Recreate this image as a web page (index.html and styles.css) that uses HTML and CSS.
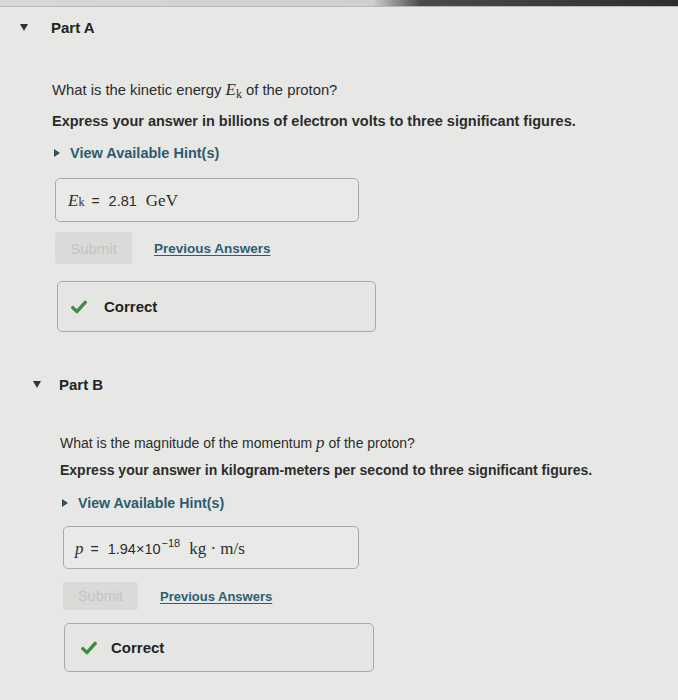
FILE: index.html
```html
<!DOCTYPE html>
<html>
<head>
<meta charset="utf-8">
<link rel="stylesheet" href="styles.css">
</head>
<body>
<div class="topbar"></div>
<section class="part part-a">
  <div class="part-head">
    <span class="caret-down"></span>
    <span class="part-title">Part A</span>
  </div>
  <div class="part-body">
    <p class="question">What is the kinetic energy <span class="math">E</span><sub class="sub">k</sub> of the proton?</p>
    <p class="instr">Express your answer in billions of electron volts to three significant figures.</p>
    <div class="hint"><span class="caret-right"></span><span>View Available Hint(s)</span></div>
    <div class="answer-box"><span class="math">E</span><sub class="sub">k</sub><span class="eq">=</span><span class="num">2.81</span><span class="unit">GeV</span></div>
    <div class="actions">
      <span class="submit">Submit</span>
      <span class="prev">Previous Answers</span>
    </div>
    <div class="correct">
      <svg class="check" viewBox="0 0 16 14" width="16" height="14"><path d="M1.8 7.6 L5.9 11.6 L14.2 2.4" fill="none" stroke="#3f8b3f" stroke-width="3.4" stroke-linecap="round" stroke-linejoin="round"/></svg>
      <span>Correct</span>
    </div>
  </div>
</section>
<section class="part part-b">
  <div class="part-head">
    <span class="caret-down"></span>
    <span class="part-title">Part B</span>
  </div>
  <div class="part-body">
    <p class="question">What is the magnitude of the momentum <span class="math">p</span> of the proton?</p>
    <p class="instr">Express your answer in kilogram-meters per second to three significant figures.</p>
    <div class="hint"><span class="caret-right"></span><span>View Available Hint(s)</span></div>
    <div class="answer-box"><span class="math">p</span><span class="eq">=</span><span class="num">1.94×10<sup class="sup">−18</sup></span><span class="unit">kg · m/s</span></div>
    <div class="actions">
      <span class="submit">Submit</span>
      <span class="prev">Previous Answers</span>
    </div>
    <div class="correct">
      <svg class="check" viewBox="0 0 16 14" width="16" height="14"><path d="M1.8 7.6 L5.9 11.6 L14.2 2.4" fill="none" stroke="#3f8b3f" stroke-width="3.4" stroke-linecap="round" stroke-linejoin="round"/></svg>
      <span>Correct</span>
    </div>
  </div>
</section>
</body>
</html>
```
FILE: styles.css
```css
html, body {
  margin: 0;
  padding: 0;
}
body {
  width: 678px;
  height: 700px;
  overflow: hidden;
  background: #e7e8e6;
  font-family: "Liberation Sans", Arial, sans-serif;
  color: #2a2a2a;
}
.topbar {
  height: 6px;
  background: linear-gradient(to right, #d8d8d6 0%, #cfcfcd 55%, #4a4a4a 62%, #2e2e2e 100%);
  border-bottom: 1px solid #b9b9b7;
}
.part-head {
  display: flex;
  align-items: center;
  height: 20px;
}
.caret-down {
  width: 0;
  height: 0;
  border-left: 4.5px solid transparent;
  border-right: 4.5px solid transparent;
  border-top: 7px solid #333;
}
.part-title {
  font-size: 15px;
  font-weight: bold;
  color: #232323;
}
.part-a .part-head {
  margin-top: 10px;
  padding-left: 20px;
  gap: 23px;
}
.part-a .part-body {
  padding-left: 52px;
}
.part-b .part-head {
  margin-top: 42px;
  padding-left: 33px;
  gap: 18px;
}
.part-b .part-body {
  padding-left: 60px;
}
p {
  margin: 0;
  line-height: 20px;
}
.question {
  font-size: 14.5px;
  color: #2c2c2c;
}
.instr {
  font-size: 14.5px;
  font-weight: bold;
  color: #2c2c2c;
}
.math {
  font-family: "Liberation Serif", "Times New Roman", serif;
  font-style: italic;
  font-size: 17px;
}
.sub {
  font-family: "Liberation Serif", serif;
  font-size: 12px;
  vertical-align: -3px;
  line-height: 0;
}
.sup {
  font-size: 11px;
  vertical-align: 7px;
  line-height: 0;
  margin-left: 1px;
}
.hint {
  display: flex;
  align-items: center;
  gap: 10px;
  height: 20px;
  font-size: 14.5px;
  font-weight: bold;
  color: #2d5b6d;
}
.caret-right {
  width: 0;
  height: 0;
  border-top: 4.5px solid transparent;
  border-bottom: 4.5px solid transparent;
  border-left: 6.5px solid #2f4f5c;
  margin-left: 2px;
}
.answer-box {
  display: flex;
  align-items: baseline;
  box-sizing: border-box;
  background: #e9eae8;
  border: 1px solid #a9aaa8;
  border-radius: 5px;
  padding: 0 12px;
  font-size: 14.5px;
  color: #2c2c2c;
}
.answer-box .eq {
  margin: 0 9px 0 7px;
  font-size: 14px;
}
.answer-box .unit {
  margin-left: 9px;
  font-family: "Liberation Serif", "Times New Roman", serif;
  font-size: 17px;
}
.actions {
  display: flex;
  align-items: center;
}
.submit {
  display: flex;
  align-items: center;
  justify-content: center;
  box-sizing: border-box;
  background: #dadbd9;
  color: #c3c4c2;
  font-size: 15px;
  border-radius: 3px;
}
.prev {
  font-size: 13.5px;
  font-weight: bold;
  color: #2d5e73;
  text-decoration: underline;
  text-underline-offset: 2px;
}
.correct {
  display: flex;
  align-items: center;
  box-sizing: border-box;
  border: 1px solid #a9aaa8;
  border-radius: 5px;
  background: #e5e6e4;
  font-size: 15px;
  font-weight: bold;
  color: #232323;
}
.check {
  flex: none;
}

/* Part A vertical positions */
.part-a .question { margin-top: 43px; font-size: 14.8px; }
.part-a .instr { margin-top: 11px; }
.part-a .hint { margin-top: 12px; }
.part-a .answer-box { margin-top: 15px; width: 304px; height: 44px; line-height: 44px; padding-left: 12px; margin-left: 3px; }
.part-a .actions { margin-top: 10px; height: 32px; margin-left: 3px; }
.part-a .submit { width: 77px; height: 32px; }
.part-a .prev { margin-left: 22px; }
.part-a .correct { margin-top: 17px; width: 319px; height: 51px; margin-left: 5px; padding-left: 13px; gap: 17px; }

/* Part B: slightly smaller due to the photo perspective */
.part-b .question { margin-top: 39px; font-size: 14px; }
.part-b .instr { margin-top: 7px; font-size: 14px; }
.part-b .hint { margin-top: 13px; font-size: 14.2px; }
.part-b .answer-box { margin-top: 13px; width: 296px; height: 43px; line-height: 43px; padding-left: 11px; margin-left: 3px; }
.part-b .actions { margin-top: 13px; height: 28px; margin-left: 3px; }
.part-b .submit { width: 75px; height: 28px; font-size: 14.5px; }
.part-b .prev { margin-left: 22px; font-size: 13px; }
.part-b .correct { margin-top: 13px; width: 310px; height: 49px; margin-left: 4px; padding-left: 16px; gap: 14px; }
```
